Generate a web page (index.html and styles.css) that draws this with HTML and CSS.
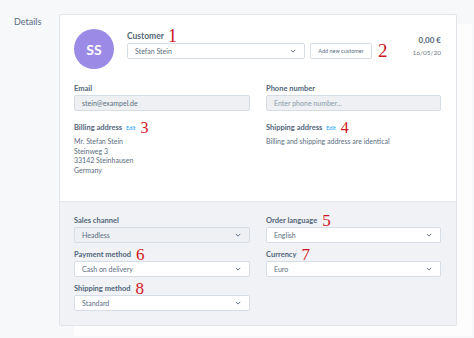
FILE: index.html
```html
<!DOCTYPE html>
<html>
<head>
<meta charset="utf-8">
<link rel="stylesheet" href="styles.css">
</head>
<body>
<div class="page">
  <div class="side-label">Details</div>
  <div class="card">
    <div class="top">
      <div class="header">
        <div class="avatar">SS</div>
        <div class="customer">
          <div class="label big">Customer <span class="num n1">1</span></div>
          <div class="row">
            <div class="select cust-select"><span>Stefan Stein</span><svg class="chev" viewBox="0 0 8 5"><path d="M1 1l3 3 3-3" fill="none" stroke="#52667a" stroke-width="1.2"/></svg></div>
            <div class="btn">Add new customer</div>
            <span class="num n2">2</span>
          </div>
        </div>
        <div class="summary">
          <div class="price">0,00 €</div>
          <div class="date">16/05/20</div>
        </div>
      </div>
      <div class="grid">
        <div class="field">
          <div class="label">Email</div>
          <div class="input disabled">stein@exampel.de</div>
        </div>
        <div class="field">
          <div class="label">Phone number</div>
          <div class="input disabled placeholder">Enter phone number...</div>
        </div>
        <div class="field addr">
          <div class="label">Billing address <a class="edit">Edit</a> <span class="num n3">3</span></div>
          <div class="text">Mr. Stefan Stein<br>Steinweg 3<br>33142 Steinhausen<br>Germany</div>
        </div>
        <div class="field addr">
          <div class="label">Shipping address <a class="edit">Edit</a> <span class="num n4">4</span></div>
          <div class="text">Billing and shipping address are identical</div>
        </div>
      </div>
    </div>
    <div class="bottom">
      <div class="grid2">
        <div class="field">
          <div class="label">Sales channel</div>
          <div class="select disabled"><span>Headless</span><svg class="chev" viewBox="0 0 8 5"><path d="M1 1l3 3 3-3" fill="none" stroke="#52667a" stroke-width="1.2"/></svg></div>
        </div>
        <div class="field">
          <div class="label">Order language <span class="num n5">5</span></div>
          <div class="select"><span>English</span><svg class="chev" viewBox="0 0 8 5"><path d="M1 1l3 3 3-3" fill="none" stroke="#52667a" stroke-width="1.2"/></svg></div>
        </div>
        <div class="field">
          <div class="label">Payment method <span class="num n6">6</span></div>
          <div class="select"><span>Cash on delivery</span><svg class="chev" viewBox="0 0 8 5"><path d="M1 1l3 3 3-3" fill="none" stroke="#52667a" stroke-width="1.2"/></svg></div>
        </div>
        <div class="field">
          <div class="label">Currency <span class="num n7">7</span></div>
          <div class="select"><span>Euro</span><svg class="chev" viewBox="0 0 8 5"><path d="M1 1l3 3 3-3" fill="none" stroke="#52667a" stroke-width="1.2"/></svg></div>
        </div>
        <div class="field">
          <div class="label">Shipping method <span class="num n8">8</span></div>
          <div class="select"><span>Standard</span><svg class="chev" viewBox="0 0 8 5"><path d="M1 1l3 3 3-3" fill="none" stroke="#52667a" stroke-width="1.2"/></svg></div>
        </div>
      </div>
    </div>
  </div>
</div>
</body>
</html>
```
FILE: styles.css
```css
* { box-sizing: border-box; }
html, body { margin: 0; padding: 0; }
body {
  background: #f7f8fa;
  font-family: Lato, "Open Sans", sans-serif;
  color: #52667a;
  width: 474px;
  height: 338px;
  overflow: hidden;
}
.page {
  display: flex;
  padding: 14px 0 0 0;
}
.side-label {
  width: 59px;
  padding: 2px 0 0 14px;
  font-size: 9px;
  color: #5b6d7f;
}
.card {
  width: 398px;
  border: 1px solid #e1e5ea;
  border-radius: 2px;
  background: #fff;
  box-shadow: 15px 10px 0 0 #fdfdfe;
}
.top {
  height: 186px;
  padding: 14px 15px 0 14px;
}
.header {
  display: flex;
  align-items: flex-start;
  height: 40px;
}
.avatar {
  width: 40px;
  height: 40px;
  border-radius: 50%;
  background: #9b8be6;
  color: #fff;
  font-weight: 700;
  font-size: 14px;
  display: flex;
  align-items: center;
  justify-content: center;
  flex: none;
}
.customer {
  margin-left: 13px;
}
.label {
  font-size: 7.5px;
  font-weight: 700;
  color: #52667a;
  height: 12px;
  line-height: 12px;
  white-space: nowrap;
  display: flex;
  align-items: center;
}
.label.big {
  font-size: 8.5px;
  height: 14px;
  line-height: 14px;
}
.num {
  font-family: "Liberation Serif", serif;
  font-weight: 400;
  color: #d0161e;
  font-size: 17px;
  line-height: 12px;
  margin-left: 5px;
}
.big .num { margin-left: 4px; font-size: 18px; }
.row {
  display: flex;
  align-items: center;
}
.select, .input {
  height: 16px;
  border: 1px solid #d6dde4;
  border-radius: 2px;
  background: #fff;
  font-size: 7px;
  color: #5b6d7f;
  display: flex;
  align-items: center;
  justify-content: space-between;
  padding: 0 8px 0 7px;
}
.disabled { background: #eef0f3; }
.placeholder { color: #8a9aa9; }
.cust-select { width: 178px; }
.chev { width: 6px; height: 4px; }
.btn {
  margin-left: 5px;
  height: 16px;
  width: 62px;
  border: 1px solid #d6dde4;
  border-radius: 2px;
  background: #fff;
  font-size: 5.5px;
  color: #5b6d7f;
  display: flex;
  align-items: center;
  justify-content: center;
  white-space: nowrap;
}
.n2 { font-size: 19px; margin-left: 6px; }
.summary {
  margin-left: auto;
  text-align: right;
  padding-top: 6px;
}
.price { font-size: 8px; font-weight: 700; }
.date { font-size: 6.5px; margin-top: 4px; color: #6f7b87; }
.grid {
  display: grid;
  grid-template-columns: 176px 175px;
  column-gap: 16px;
  margin-top: 14px;
}
.field { display: flex; flex-direction: column; }
.addr { margin-top: 11px; }
.addr .num { font-size: 16px; }
.edit {
  color: #189eff;
  font-size: 5.5px;
  font-weight: 400;
  margin-left: 4px;
}
.text {
  font-size: 7px;
  line-height: 9.7px;
  color: #5b6d7f;
  margin-top: 3px;
}
.bottom {
  background: #f0f2f5;
  border-top: 1px solid #e3e7ec;
  height: 124px;
  padding: 13px 15px 0 14px;
}
.grid2 {
  display: grid;
  grid-template-columns: 176px 175px;
  column-gap: 16px;
  row-gap: 6px;
}
```
